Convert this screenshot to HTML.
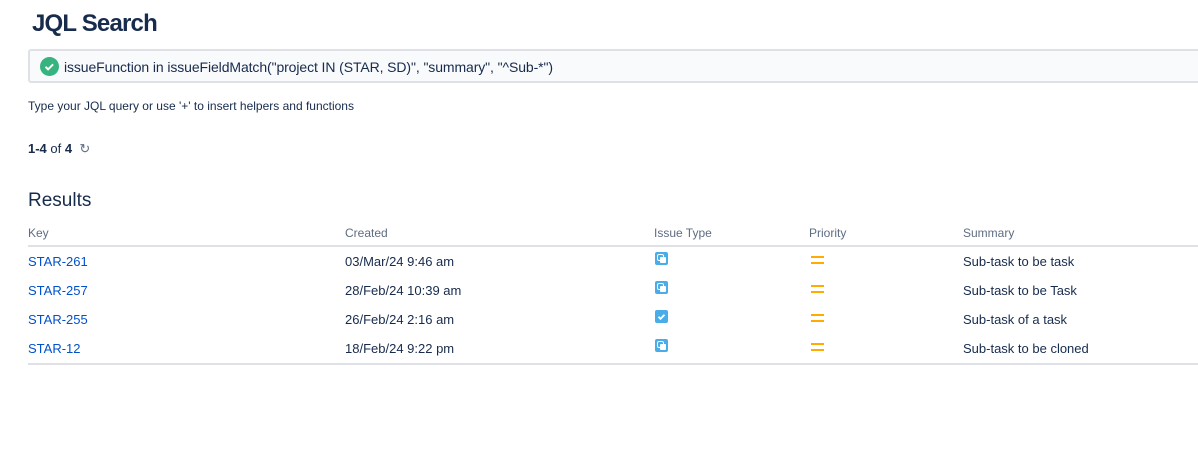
<!DOCTYPE html><html><head><style>
body{margin:0;width:1198px;height:473px;background:#fff;font-family:"Liberation Sans",sans-serif;color:#172b4d;position:relative;overflow:hidden}
.a{position:absolute;white-space:nowrap}
.h{font-size:12px;color:#5e6c84}
.r{font-size:13px;color:#172b4d}
.k{color:#0052cc;font-size:13px}
.ic{position:absolute;width:13px;height:13px;background:#4bade8;border-radius:2px}
.pr{position:absolute;width:13px;border-top:2px solid #ffab00;border-bottom:2px solid #ffab00;box-sizing:border-box;height:8px}
.ic.s::before{content:"";position:absolute;left:2px;top:2px;width:5px;height:5px;background:#4bade8;border:1.5px solid #fff;border-radius:2px}
.ic.s::after{content:"";position:absolute;left:5px;top:5px;width:6px;height:6px;background:#fff;border-radius:1px}
</style></head><body>
<div class="a" style="left:32px;top:10px;font-size:24px;font-weight:bold;letter-spacing:-0.8px">JQL Search</div>
<div class="a" style="left:28px;top:49px;width:1180px;height:34px;background:#f9fafb;border:2px solid #dfe1e6;box-sizing:border-box;border-radius:3px"></div>
<div class="a" style="left:40px;top:57px;width:19px;height:19px;border-radius:50%;background:#36b37e"><svg width="19" height="19"><path d="M5.5 9.8l2.6 2.5 5-5" stroke="#fff" stroke-width="2" fill="none"/></svg></div>
<div class="a" style="left:64px;top:59px;font-size:14px;letter-spacing:-0.1px">issueFunction in issueFieldMatch("project IN (STAR, SD)", "summary", "^Sub-*")</div>
<div class="a" style="left:28px;top:99px;font-size:12px">Type your JQL query or use '+' to insert helpers and functions</div>
<div class="a" style="left:28px;top:141px;font-size:13px"><b>1-4</b> of <b>4</b> <span style="color:#5e6c84;font-size:13px">&nbsp;↻</span></div>
<div class="a" style="left:28px;top:190px;font-size:19px">Results</div>
<div class="a h" style="left:28px;top:226px">Key</div>
<div class="a h" style="left:345px;top:226px">Created</div>
<div class="a h" style="left:654px;top:226px">Issue Type</div>
<div class="a h" style="left:809px;top:226px">Priority</div>
<div class="a h" style="left:963px;top:226px">Summary</div>
<div class="a" style="left:28px;top:245px;width:1170px;height:2px;background:#dfe1e6"></div>
<div class="a" style="left:28px;top:363px;width:1170px;height:2px;background:#dfe1e6"></div>

<div class="a k" style="left:28px;top:254px">STAR-261</div><div class="a r" style="left:345px;top:254px">03/Mar/24 9:46 am</div>
<div class="ic s" style="left:655px;top:252px"></div><div class="pr" style="left:811px;top:256px"></div>
<div class="a r" style="left:963px;top:254px">Sub-task to be task</div>

<div class="a k" style="left:28px;top:283px">STAR-257</div><div class="a r" style="left:345px;top:283px">28/Feb/24 10:39 am</div>
<div class="ic s" style="left:655px;top:281px"></div><div class="pr" style="left:811px;top:285px"></div>
<div class="a r" style="left:963px;top:283px">Sub-task to be Task</div>

<div class="a k" style="left:28px;top:312px">STAR-255</div><div class="a r" style="left:345px;top:312px">26/Feb/24 2:16 am</div>
<div class="ic" style="left:655px;top:310px"><svg width="13" height="13"><path d="M3.5 6.8l2 2 4-4" stroke="#fff" stroke-width="1.8" fill="none"/></svg></div><div class="pr" style="left:811px;top:314px"></div>
<div class="a r" style="left:963px;top:312px">Sub-task of a task</div>

<div class="a k" style="left:28px;top:341px">STAR-12</div><div class="a r" style="left:345px;top:341px">18/Feb/24 9:22 pm</div>
<div class="ic s" style="left:655px;top:339px"></div><div class="pr" style="left:811px;top:343px"></div>
<div class="a r" style="left:963px;top:341px">Sub-task to be cloned</div>
</body></html>
